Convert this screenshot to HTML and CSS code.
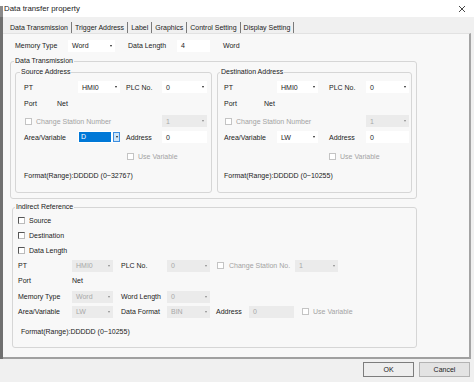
FILE: index.html
```html
<!DOCTYPE html>
<html lang="en">
<head>
  <meta charset="UTF-8" />
  <title>Data transfer property</title>
  <link rel="stylesheet" href="styles.css">
</head>
<body>
<div class="window">
  <div class="titlebar">
    <span>Data transfer property</span>
    <svg class="close" width="8" height="8" viewBox="0 0 8 8"><path d="M1 1L7 7M7 1L1 7" stroke="#333" stroke-width="0.9" fill="none"/></svg>
  </div>
  <div class="frame">
    <div class="tabs">
      <span class="tab active">Data Transmission</span>
      <span class="tab">Trigger Address</span>
      <span class="tab">Label</span>
      <span class="tab">Graphics</span>
      <span class="tab">Control Setting</span>
      <span class="tab">Display Setting</span>
    </div>
    <div class="panel">
      <div class="row top-row">
        <span class="c-mt">Memory Type</span>
        <span class="combo c-word">Word</span>
        <span class="c-dl">Data Length</span>
        <span class="field c-len">4</span>
        <span>Word</span>
      </div>

      <fieldset class="group outer">
        <legend>Data Transmission</legend>
        <div class="pair">
          <fieldset class="group addr src">
            <legend>Source Address</legend>
            <div class="row r1">
              <span class="l1">PT</span>
              <span class="combo k1">HMI0</span>
              <span class="l2">PLC No.</span>
              <span class="combo k2">0</span>
            </div>
            <div class="row">
              <span class="lp">Port</span>
              <span>Net</span>
            </div>
            <div class="row r3">
              <span class="check off grow"><span class="box"></span>Change Station Number</span>
              <span class="combo off k2">1</span>
            </div>
            <div class="row">
              <span class="l1">Area/Variable</span>
              <span class="combo focus k1"><span class="sel">D</span><span class="btn"></span></span>
              <span class="l2">Address</span>
              <span class="field k2">0</span>
            </div>
            <div class="row r5">
              <span class="check off"><span class="box"></span>Use Variable</span>
            </div>
            <div class="row r6">
              <span>Format(Range):DDDDD (0~32767)</span>
            </div>
          </fieldset>

          <fieldset class="group addr dst">
            <legend>Destination Address</legend>
            <div class="row r1">
              <span class="l1">PT</span>
              <span class="combo k1">HMI0</span>
              <span class="l2">PLC No.</span>
              <span class="combo k2">0</span>
            </div>
            <div class="row">
              <span class="lp">Port</span>
              <span>Net</span>
            </div>
            <div class="row r3">
              <span class="check off grow"><span class="box"></span>Change Station Number</span>
              <span class="combo off k2">1</span>
            </div>
            <div class="row">
              <span class="l1">Area/Variable</span>
              <span class="combo k1">LW</span>
              <span class="l2">Address</span>
              <span class="field k2">0</span>
            </div>
            <div class="row r5">
              <span class="check off"><span class="box"></span>Use Variable</span>
            </div>
            <div class="row r6">
              <span>Format(Range):DDDDD (0~10255)</span>
            </div>
          </fieldset>
        </div>
      </fieldset>

      <fieldset class="group indirect">
        <legend>Indirect Reference</legend>
        <div class="row i-first"><span class="check"><span class="box"></span>Source</span></div>
        <div class="row"><span class="check"><span class="box"></span>Destination</span></div>
        <div class="row"><span class="check"><span class="box"></span>Data Length</span></div>
        <div class="row">
          <span class="i1">PT</span>
          <span class="combo off i2">HMI0</span>
          <span class="i3">PLC No.</span>
          <span class="combo off i4">0</span>
          <span class="check off i5"><span class="box"></span>Change Station No.</span>
          <span class="combo off i4">1</span>
        </div>
        <div class="row">
          <span class="i1">Port</span>
          <span>Net</span>
        </div>
        <div class="row i-mem">
          <span class="i1">Memory Type</span>
          <span class="combo off i2">Word</span>
          <span class="i3">Word Length</span>
          <span class="combo off i4">0</span>
        </div>
        <div class="row">
          <span class="i1">Area/Variable</span>
          <span class="combo off i2">LW</span>
          <span class="i3">Data Format</span>
          <span class="combo off i4">BIN</span>
          <span class="i6">Address</span>
          <span class="field off i7">0</span>
          <span class="check off"><span class="box"></span>Use Variable</span>
        </div>
        <div class="row i-fmt">
          <span>Format(Range):DDDDD (0~10255)</span>
        </div>
      </fieldset>
    </div>
  </div>
  <div class="footer">
    <button class="ok">OK</button>
    <button>Cancel</button>
  </div>
</div>
</body>
</html>
```

FILE: styles.css
```css
html, body {
  margin: 0;
  padding: 0;
  background: #f0f0f0;
  overflow: hidden;
}
body {
  font-family: "Liberation Sans", Arial, sans-serif;
  font-size: 7px;
  color: #1b1b1b;
}
.window {
  width: 474px;
  height: 382px;
  display: flex;
  flex-direction: column;
}
.titlebar {
  height: 17px;
  flex: none;
  background:
    linear-gradient(#fff 6px, transparent 6px),
    linear-gradient(to right, #8a8a8a 3px, #fff 3px);
  display: flex;
  align-items: center;
  justify-content: space-between;
  padding: 0 8px 0 4px;
  font-size: 7.8px;
  color: #222;
}
.frame {
  flex: 1;
  display: flex;
  flex-direction: column;
  border-left: 3px solid #707070;
}
.tabs {
  height: 16px;
  flex: none;
  display: flex;
  align-items: flex-end;
  padding-left: 4px;
  background: #f0f0f0;
}
.tab {
  height: 11px;
  line-height: 11px;
  padding: 0 3px 0 3px;
  border-right: 1px solid #7a7a7a;
}
.panel {
  flex: 1;
  margin-right: 3px;
  background: #f8f8f8;
  border-top: 1px solid #e2e2e2;
  border-right: 2px solid #a4a4a4;
  border-bottom: 2px solid #a0a0a0;
  padding: 5px 0 0 7px;
}
.row {
  display: flex;
  align-items: center;
  height: 16px;
  white-space: nowrap;
}
.top-row { height: 13px; padding-left: 5px; }
.c-mt { width: 53px; }
.c-word { width: 47px; height: 13px; }
.c-dl { width: 49px; margin-left: 13px; }
.c-len { width: 33px; height: 13px; margin-right: 13px; }

.combo {
  display: flex;
  align-items: center;
  justify-content: space-between;
  box-sizing: border-box;
  height: 12px;
  padding: 0 3px 0 4px;
  background: #fff;
}
.combo::after {
  content: "";
  border-left: 1.5px solid transparent;
  border-right: 1.5px solid transparent;
  border-top: 2px solid #222;
}
.combo.off { background: #ebebeb; color: #a8a8a8; }
.combo.off::after { border-top-color: #8a8a8a; }
.combo.focus { padding: 0 0 0 1px; }
.combo.focus::after { display: none; }
.combo.focus .sel {
  flex: 1;
  height: 10px;
  line-height: 10px;
  background: #0078d7;
  color: #fff;
  padding-left: 2px;
  margin-right: 2px;
}
.combo.focus .btn {
  width: 7px;
  height: 10px;
  box-sizing: border-box;
  background: #cce4f7;
  border: 1px solid #3d8ee0;
  display: flex;
  align-items: center;
  justify-content: center;
}
.combo.focus .btn::after {
  content: "";
  border-left: 1.5px solid transparent;
  border-right: 1.5px solid transparent;
  border-top: 2px solid #222;
}
.field {
  display: flex;
  align-items: center;
  box-sizing: border-box;
  height: 12px;
  padding-left: 4px;
  background: #fff;
}
.field.off { background: #ebebeb; color: #a8a8a8; }

.check { display: flex; align-items: center; gap: 4px; }
.check.off { color: #a3a3a3; }
.box {
  width: 5px;
  height: 5px;
  background: #fff;
  border: 1px solid #555;
  border-right-color: #bbb;
  border-bottom-color: #bbb;
}
.check.off .box { border-color: #c4c4c4; }
.grow { flex: 1; }

.group {
  margin: 0;
  border: 1px solid #d6d6d6;
  border-radius: 3px;
  box-sizing: border-box;
  min-width: 0;
}
.group legend {
  padding: 0 1px;
  line-height: 8px;
  color: #222;
}
.outer {
  width: 407px;
  margin-top: 5px;
  padding: 0 4px 5px 4px;
}
.outer > legend { margin-left: -1px; }
.pair {
  display: flex;
  gap: 5px;
  margin-top: 3px;
}
.addr {
  padding: 3px 4px 9px 8px;
}
.addr > legend { margin-left: -4px; }
.src { width: 197px; }
.dst { width: 195px; padding-left: 6px; padding-right: 2px; }
.r3 { margin-top: 2px; }
.r3 .check { padding-left: 1px; }
.r5 { margin-top: 3px; padding-left: 103px; }
.r6 { margin-top: 3px; }

.src .l1 { width: 54px; }
.src .k1 { width: 42px; }
.src .l2 { width: 36px; margin-left: 6px; }
.src .k2 { width: 45px; }
.src .lp { width: 33px; }

.dst .l1 { width: 53px; }
.dst .k1 { width: 41px; }
.dst .l2 { width: 37px; margin-left: 11px; }
.dst .k2 { width: 43px; }
.dst .lp { width: 40px; }
.dst .r5 { padding-left: 105px; }

.indirect {
  width: 405px;
  margin: 4px 0 0 2px;
  padding: 2px 4px 8px 5px;
}
.indirect > legend { margin-left: -3px; }
.indirect .row { height: 15px; }
.indirect .i-mem { margin-top: 1px; }
.indirect .i-fmt { margin-top: 5px; padding-left: 3px; }
.i1 { width: 54px; }
.i2 { width: 41px; }
.i3 { width: 46px; margin-left: 8px; }
.i4 { width: 43px; }
.i5 { width: 78px; margin-left: 7px; gap: 5px; }
.i6 { width: 33px; margin-left: 6px; }
.i7 { width: 45px; margin-right: 8px; }

.footer {
  height: 23px;
  flex: none;
  display: flex;
  justify-content: flex-end;
  align-items: flex-start;
  gap: 5px;
  padding: 3px 4px 0 0;
  box-sizing: border-box;
  background: #f0f0f0;
}
.footer button {
  width: 51px;
  height: 15px;
  padding: 0;
  font-family: inherit;
  font-size: 7px;
  color: #1b1b1b;
  background: #e3e3e3;
  border: 1px solid #b3b3b3;
}
.footer button.ok {
  background: #eeeeee;
  border-color: #7d7d7d;
}
```
